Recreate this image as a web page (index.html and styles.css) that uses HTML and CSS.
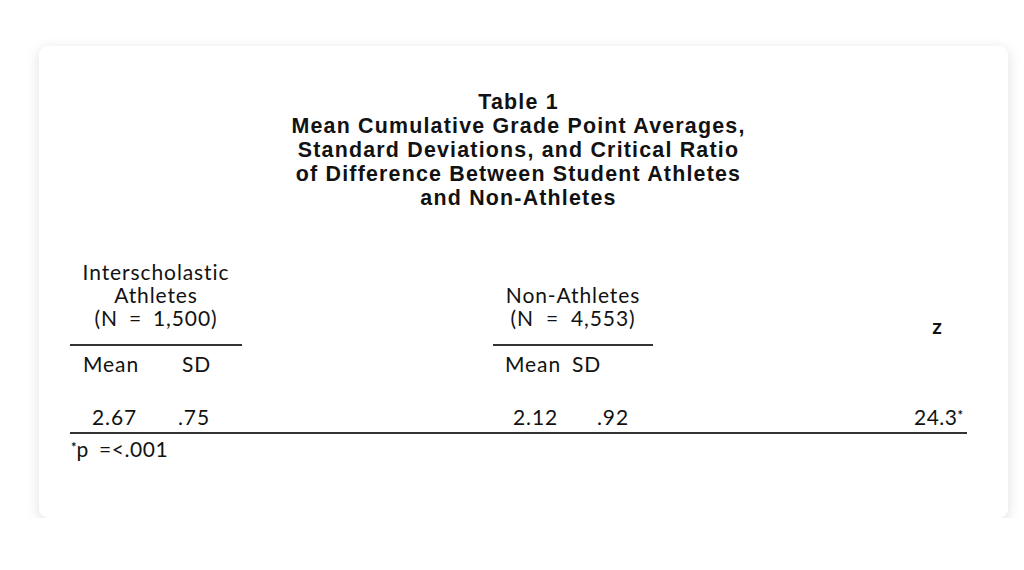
FILE: index.html
```html
<!DOCTYPE html>
<html>
<head>
<meta charset="utf-8">
<link rel="stylesheet" href="styles.css">
</head>
<body>
<div class="card">
  <div class="title">Table 1<br>Mean Cumulative Grade Point Averages,<br>Standard Deviations, and Critical Ratio<br>of Difference Between Student Athletes<br>and Non-Athletes</div>
  <div class="data">
    <div class="head head-a">Interscholastic<br>Athletes<br>(N<span class="eq">=</span>1,500)</div>
    <div class="head head-b">Non-Athletes<br>(N<span class="eq">=</span>4,553)</div>
    <div class="head head-z">z</div>

    <div class="sub sub-a"><span class="c1">Mean</span><span>SD</span></div>
    <div class="sub sub-b"><span class="c1">Mean</span><span>SD</span></div>

    <div class="vals vals-a"><span class="c1">2.67</span><span>.75</span></div>
    <div class="vals vals-b"><span class="c1">2.12</span><span>.92</span></div>
    <div class="vals vals-z"><span>24.3<span class="mark">*</span></span></div>
  </div>
  <div class="rule"></div>
  <div class="foot"><span class="mark">*</span>p <span class="feq">=</span>&lt;.001</div>
</div>
</body>
</html>
```
FILE: styles.css
```css
html, body {
  margin: 0;
  padding: 0;
  background: #ffffff;
}
body {
  font-family: Lato, "DejaVu Sans", sans-serif;
  color: #121212;
}
.card {
  margin: 46px 16px 0 39px;
  width: 969px;
  height: 472px;
  box-sizing: border-box;
  background: #ffffff;
  border-radius: 9px;
  box-shadow: 0 3px 14px rgba(0, 0, 0, 0.13);
  padding: 44px 41px 0 31px;
}
.title {
  font-family: "Liberation Sans", Arial, sans-serif;
  text-align: center;
  font-weight: 700;
  font-size: 21.4px;
  line-height: 24px;
  letter-spacing: 1.2px;
}
.data {
  margin-top: 50px;
  display: grid;
  grid-template-columns: 172px 251px 160px 1fr;
  font-size: 21px;
  line-height: 23px;
  letter-spacing: 0.9px;
}
.head {
  text-align: center;
  align-self: end;
  padding-bottom: 15px;
}
.eq {
  margin: 0 11px;
}
.head-a {
  grid-column: 1;
  grid-row: 1;
  border-bottom: 2px solid #333;
}
.head-b {
  grid-column: 3;
  grid-row: 1;
  border-bottom: 2px solid #333;
}
.head-b .eq {
  margin: 0 12px;
}
.head-z {
  grid-column: 4;
  grid-row: 1;
  text-align: right;
  font-weight: 700;
  letter-spacing: 0;
  padding-right: 25px;
  padding-bottom: 9px;
}
.sub {
  grid-row: 2;
  display: flex;
  padding-top: 6px;
}
.sub-a { grid-column: 1; padding-left: 13px; }
.sub-a .c1 { width: 99px; }
.sub-b { grid-column: 3; padding-left: 12px; }
.sub-b .c1 { width: 67px; }
.vals {
  grid-row: 3;
  display: flex;
  padding-top: 30px;
}
.vals-a { grid-column: 1; padding-left: 22px; }
.vals-a .c1 { width: 86px; }
.vals-b { grid-column: 3; padding-left: 20px; }
.vals-b .c1 { width: 84px; }
.vals-z {
  grid-column: 4;
  justify-content: flex-end;
  padding-right: 4px;
  letter-spacing: 0.5px;
}
.mark {
  font-size: 13px;
  font-weight: 700;
  line-height: 0;
  letter-spacing: 0;
  vertical-align: 5px;
}
.rule {
  height: 2px;
  background: #333;
  margin-top: 4px;
}
.foot {
  font-size: 21px;
  line-height: 23px;
  letter-spacing: 0.6px;
  margin-top: 3px;
  padding-left: 1px;
}
.feq {
  margin-left: 4px;
}
```
